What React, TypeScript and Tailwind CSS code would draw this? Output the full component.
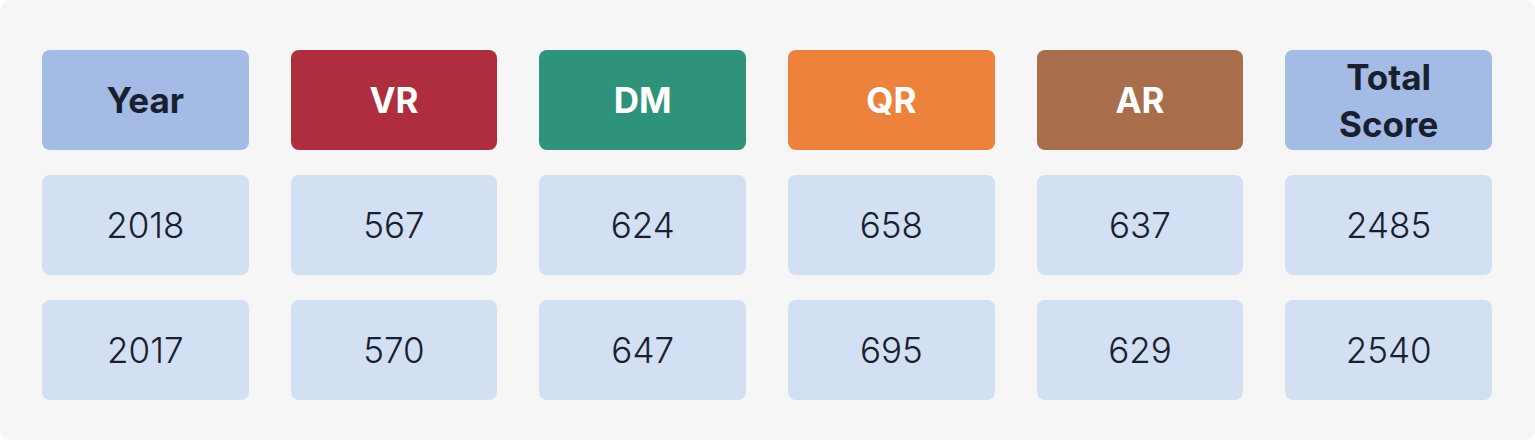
import React from "react";

const headers = [
  { label: "Year", className: "bg-[#a4bbe5] text-[#18202f]" },
  { label: "VR", className: "bg-[#ae2d3e] text-white" },
  { label: "DM", className: "bg-[#2e937a] text-white" },
  { label: "QR", className: "bg-[#ec823b] text-white" },
  { label: "AR", className: "bg-[#a86d4b] text-white" },
  { label: "Total Score", className: "bg-[#a4bbe5] text-[#18202f]" },
];

const rows = [
  ["2018", "567", "624", "658", "637", "2485"],
  ["2017", "570", "647", "695", "629", "2540"],
];

const App = () => {
  return (
    <div className="w-[1535px] h-[440px] bg-white">
      <div
        className="h-full rounded-[10px] bg-[#f6f6f7] pl-[42px] pr-[43px] pt-[50px] pb-[40px]"
        style={{ fontFamily: "Inter, 'Noto Sans', sans-serif" }}
      >
        <div className="grid grid-cols-6 gap-x-[42px] gap-y-[25px]">
          {headers.map((h) => (
            <div
              key={h.label}
              className={`flex h-[100px] items-center justify-center rounded-[8px] px-4 text-center text-[35px] font-bold leading-[47px] ${h.className}`}
            >
              {h.label === "Total Score" ? (
                <span className="pt-[2px]">
                  Total
                  <br />
                  Score
                </span>
              ) : (
                h.label
              )}
            </div>
          ))}
          {rows.map((row) =>
            row.map((v, i) => (
              <div
                key={row[0] + i}
                className="flex h-[100px] items-center justify-center rounded-[8px] bg-[#d3e0f3] text-[35px] font-light text-[#18202f]"
              >
                {v}
              </div>
            ))
          )}
        </div>
      </div>
    </div>
  );
};

export default App;
